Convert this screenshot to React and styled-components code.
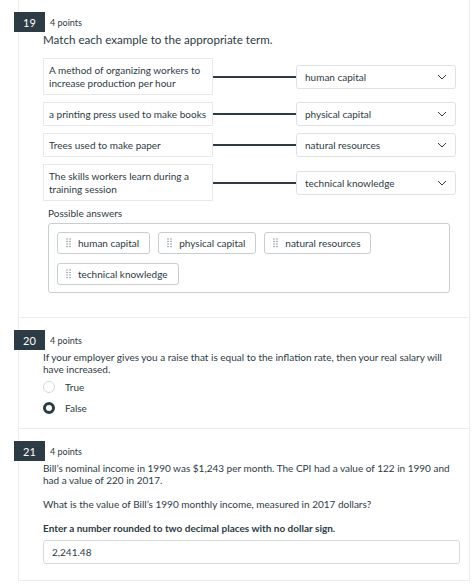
import React from 'react'
import styled, { createGlobalStyle } from 'styled-components'

const GlobalStyle = createGlobalStyle`
    body {
        margin: 0;
        background: #ffffff;
        font-family: Lato, "Open Sans", "Liberation Sans", sans-serif;
        color: #2d3b45;
    }
`

const Page = styled.div`
    padding: 0 4px 0 18px;
`

const Card = styled.section`
    border-left: 1px solid #ececec;
    border-right: 1px solid #ececec;
    border-bottom: 1px solid #ececec;
    padding: ${p => p.$top || 12}px 0 ${p => p.$bottom || 14}px 0;
`

const Header = styled.div`
    display: flex;
    align-items: center;
    gap: 5px;
    margin-left: -5px;
`

const Badge = styled.div`
    width: 31px;
    height: 20px;
    background: #2d3b45;
    color: #ffffff;
    font-size: 11px;
    display: flex;
    align-items: center;
    justify-content: center;
`

const Points = styled.span`
    font-size: 9px;
    color: #2d3b45;
`

const Body = styled.div`
    padding: 1px 10px 0 24px;
`

const Text = styled.p`
    margin: 0 0 ${p => p.$after || 0}px 0;
    font-size: ${p => p.$size || 10}px;
    line-height: ${p => (p.$size ? 13 : 12)}px;
    font-weight: ${p => (p.$bold ? 700 : 400)};
`

const Matches = styled.div`
    display: flex;
    flex-direction: column;
    gap: 7px;
    margin-top: 12px;
`

const MatchRow = styled.div`
    display: flex;
    align-items: center;
`

const Prompt = styled.div`
    width: 170px;
    box-sizing: border-box;
    border: 1px solid #e6e8ea;
    padding: 5px 5px 4px;
    font-size: 10px;
    line-height: 13px;
`

const Connector = styled.div`
    width: 83px;
    height: 2px;
    background: #2d3b45;
`

const Select = styled.div`
    width: 160px;
    height: 24px;
    box-sizing: border-box;
    border: 1px solid #dfe2e5;
    border-radius: 3px;
    display: flex;
    align-items: center;
    justify-content: space-between;
    padding: 0 8px 0 8px;
    font-size: 10px;
`

const Label = styled.div`
    font-size: 10px;
    line-height: 12px;
    margin: 6px 0 4px 5px;
`

const AnswerBox = styled.div`
    margin-left: 5px;
    width: 402px;
    box-sizing: border-box;
    border: 1px solid #c7cdd1;
    border-radius: 3px;
    padding: 8px 8px 7px;
    display: flex;
    flex-wrap: wrap;
    gap: 9px 8px;
`

const Chip = styled.div`
    height: 22px;
    box-sizing: border-box;
    border: 1px solid #c7cdd1;
    border-radius: 3px;
    display: flex;
    align-items: center;
    gap: 7px;
    padding: 0 10px 0 8px;
    font-size: 10px;
`

const Options = styled.div`
    display: flex;
    flex-direction: column;
    gap: 9px;
    margin-top: 6px;
`

const Option = styled.label`
    display: flex;
    align-items: center;
    gap: 10px;
    font-size: 10px;
    height: 12px;
`

const Radio = styled.span`
    width: 12px;
    height: 12px;
    box-sizing: border-box;
    border-radius: 50%;
    border: ${p => (p.$checked ? '3.5px solid #2d3b45' : '1px solid #d4d8db')};
    background: #ffffff;
`

const Input = styled.div`
    width: 417px;
    height: 24px;
    box-sizing: border-box;
    border: 1px solid #d6dadd;
    border-radius: 3px;
    display: flex;
    align-items: center;
    padding: 0 8px;
    font-size: 10px;
`

const Chevron = () => (
    <svg width="10" height="6" viewBox="0 0 10 6" fill="none">
        <path d="M1 1l4 4 4-4" stroke="#2d3b45" strokeWidth="1" />
    </svg>
)

const Grip = () => (
    <svg width="5" height="10" viewBox="0 0 5 10" fill="#73818c">
        {[1, 3.5, 6, 8.5].map(y => (
            <React.Fragment key={y}>
                <circle cx="1" cy={y} r="0.7" />
                <circle cx="4" cy={y} r="0.7" />
            </React.Fragment>
        ))}
    </svg>
)

const matches = [
    ['A method of organizing workers to increase production per hour', 'human capital'],
    ['a printing press used to make books', 'physical capital'],
    ['Trees used to make paper', 'natural resources'],
    ['The skills workers learn during a training session', 'technical knowledge'],
]

const answers = ['human capital', 'physical capital', 'natural resources', 'technical knowledge']

const App = () => (
    <Page>
        <GlobalStyle />
        <Card $top={12} $bottom={24}>
            <Header>
                <Badge>19</Badge>
                <Points>4 points</Points>
            </Header>
            <Body>
                <Text $size={11.6}>Match each example to the appropriate term.</Text>
                <Matches>
                    {matches.map(([prompt, answer]) => (
                        <MatchRow key={prompt}>
                            <Prompt>{prompt}</Prompt>
                            <Connector />
                            <Select>
                                {answer}
                                <Chevron />
                            </Select>
                        </MatchRow>
                    ))}
                </Matches>
                <Label>Possible answers</Label>
                <AnswerBox>
                    {answers.map(a => (
                        <Chip key={a}>
                            <Grip />
                            {a}
                        </Chip>
                    ))}
                </AnswerBox>
            </Body>
        </Card>
        <Card $top={12} $bottom={14}>
            <Header>
                <Badge>20</Badge>
                <Points>4 points</Points>
            </Header>
            <Body>
                <Text>
                    If your employer gives you a raise that is equal to the inflation rate, then your real salary will
                    have increased.
                </Text>
                <Options>
                    <Option>
                        <Radio />
                        True
                    </Option>
                    <Option>
                        <Radio $checked />
                        False
                    </Option>
                </Options>
            </Body>
        </Card>
        <Card $top={12} $bottom={16}>
            <Header>
                <Badge>21</Badge>
                <Points>4 points</Points>
            </Header>
            <Body>
                <Text $after={12}>
                    Bill’s nominal income in 1990 was $1,243 per month. The CPI had a value of 122 in 1990 and
                    had a value of 220 in 2017.
                </Text>
                <Text $after={12}>What is the value of Bill’s 1990 monthly income, measured in 2017 dollars?</Text>
                <Text $bold $after={6}>Enter a number rounded to two decimal places with no dollar sign.</Text>
                <Input>2,241.48</Input>
            </Body>
        </Card>
    </Page>
)

export default App
